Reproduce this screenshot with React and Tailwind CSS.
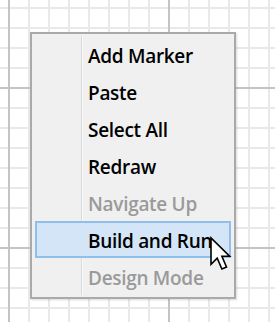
import React from 'react';

const items = [
  { label: 'Add Marker' },
  { label: 'Paste' },
  { label: 'Select All' },
  { label: 'Redraw' },
  { label: 'Navigate Up', disabled: true },
  { label: 'Build and Run', active: true },
  { label: 'Design Mode', disabled: true },
];

const Cursor = () => (
  <svg
    className="absolute left-[209px] top-[236px]"
    width="24"
    height="36"
    viewBox="0 0 24 36"
  >
    <path
      d="M2 2 L2 28.4 L8.2 22.2 L12.9 33 L17.5 31 L12.9 20.2 L20.6 20.2 Z"
      fill="#ffffff"
      stroke="#000000"
      strokeWidth="1.6"
      strokeLinejoin="miter"
    />
  </svg>
);

const App = () => {
  return (
    <div
      className="relative w-[275px] h-[322px] overflow-hidden bg-white [background-image:linear-gradient(to_right,#c4c4c4_2px,transparent_2px),linear-gradient(to_bottom,#c4c4c4_2px,transparent_2px),linear-gradient(to_right,#e9e9e9_2px,transparent_2px),linear-gradient(to_bottom,#e9e9e9_2px,transparent_2px)] [background-size:160px_160px,160px_160px,20px_20px,20px_20px] [background-position:8px_87px,8px_87px,8px_7px,8px_7px]"
      style={{ fontFamily: '"Open Sans", "Noto Sans", sans-serif' }}
    >
      {/* Context menu */}
      <div className="absolute left-[30px] top-[32px] w-[206px] h-[267px] border-2 border-[#aaaaaa] bg-[#f0f0f0] shadow-[1px_1px_2px_rgba(0,0,0,0.15)] py-[2px]">
        {/* gutter line */}
        <div className="absolute left-[49px] top-[2px] bottom-[2px] w-px bg-[#dadada]" />
        <div className="absolute left-[50px] top-[2px] bottom-[2px] w-px bg-[#fafafa]" />

        <div className="relative flex flex-col">
          {items.map((item) => (
            <div
              key={item.label}
              className={
                item.active
                  ? 'mx-[3px] h-[37px] flex items-center pl-[51px] pt-[3px] border-2 border-[#8fbfea] bg-[#d3e5f7] text-black'
                  : item.disabled
                  ? 'mx-[3px] h-[37px] flex items-center pl-[53px] pt-[3px] text-[#9a9a9a]'
                  : 'mx-[3px] h-[37px] flex items-center pl-[53px] pt-[3px] text-black'
              }
            >
              <span className="text-[19px] font-semibold leading-none tracking-[-0.3px]">{item.label}</span>
            </div>
          ))}
        </div>
      </div>

      <Cursor />
    </div>
  );
};

export default App;
